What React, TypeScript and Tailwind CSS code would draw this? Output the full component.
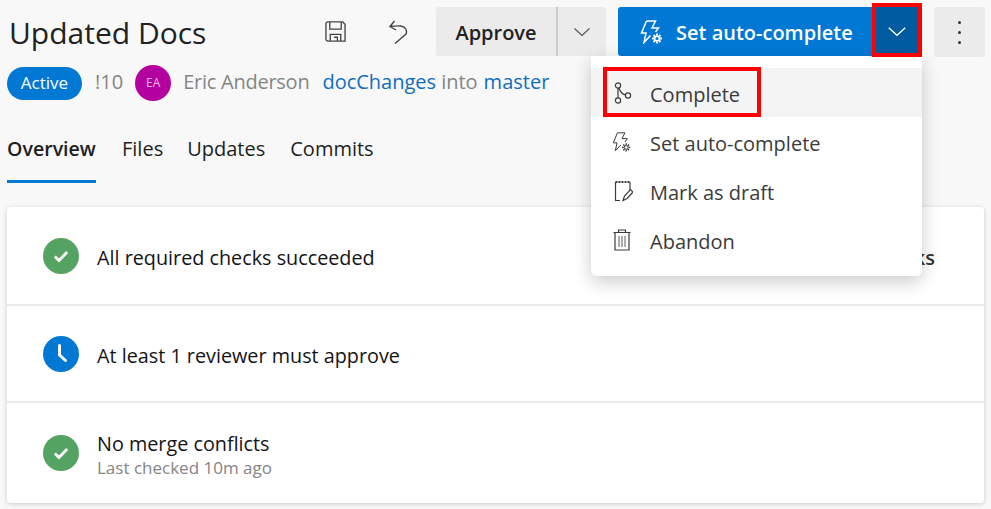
import React from "react";

const Bolt = ({ className, sw = 1.4 }: { className?: string; sw?: number }) => (
  <svg viewBox="0 0 24 24" fill="none" stroke="currentColor" strokeWidth={sw} className={className}>
    <path d="M6.5 1H15.5L12 8H18.5L15.5 12M6.5 1 1.5 13H6L4 22.5 10.5 15.5" />
    <circle cx="17" cy="18.5" r="2.3" />
    <path d="M17 13.5v2.2M17 21.3v2.2M12 18.5h2.2M19.8 18.5h2.2M13.5 15l1.5 1.5M19 20.5l1.5 1.5M13.5 22l1.5-1.5M19 16.5l1.5-1.5" strokeWidth={sw + 0.4} />
  </svg>
);

const Check = () => (
  <div className="flex h-9 w-9 shrink-0 items-center justify-center rounded-full bg-[#55a362]">
    <svg viewBox="0 0 16 16" className="h-[18px] w-[18px]" fill="none" stroke="#fff" strokeWidth="2.5">
      <path d="M2.5 8.5 6.2 12 13.5 4.5" />
    </svg>
  </div>
);

const Clock = () => (
  <div className="flex h-9 w-9 shrink-0 items-center justify-center rounded-full bg-[#0078d4]">
    <svg viewBox="0 0 36 36" className="h-9 w-9" fill="none" stroke="#fff" strokeWidth="3" strokeLinecap="round" strokeLinejoin="round">
      <path d="M16.5 9.5v9.5l6 5.5" />
    </svg>
  </div>
);

const Chevron = ({ className }: { className?: string }) => (
  <svg viewBox="0 0 18 10" fill="none" stroke="currentColor" strokeWidth="1.2" className={className}>
    <path d="M1.5 1.5 9 8.5l7.5-7" />
  </svg>
);

const MenuItem = ({ icon, label, active }: { icon: React.ReactNode; label: string; active?: boolean }) => (
  <div className={`flex h-[49px] items-center pl-[20px] text-[#3b3b3b] ${active ? "bg-[#f4f4f4]" : ""}`}>
    <div className="flex w-[22px] justify-center">{icon}</div>
    <span className="ml-[17px] pt-[5px] text-[20px]">{label}</span>
  </div>
);

const Row = ({ icon, title, sub, h }: { icon: React.ReactNode; title: string; sub?: string; h: string }) => (
  <div className={`flex items-center gap-[18px] pl-[36px] ${h}`}>
    {icon}
    <div className="flex flex-col pt-[4px]">
      <span className="text-[19.8px] leading-[26px] text-[#141414]">{title}</span>
      {sub && <span className="text-[17px] leading-[22px] text-[#858585]">{sub}</span>}
    </div>
  </div>
);

export default function App() {
  return (
    <div className="relative h-[509px] w-[991px] overflow-hidden bg-[#f8f8f8] font-['Open_Sans',sans-serif]">
      <header className="flex items-start pt-[7px]">
        <h1 className="ml-[9px] w-[316px] text-[30px] leading-[52px] font-normal text-[#222]">Updated Docs</h1>
        <div className="flex h-[49px] items-center gap-[43px] text-[#444]">
          <svg viewBox="0 0 22 22" fill="none" stroke="currentColor" strokeWidth="1.4" className="h-[21px] w-[21px]">
            <path d="M3 1h15.5L21 3.5V21H3a2 2 0 0 1-2-2V3a2 2 0 0 1 2-2zM5 1v7.5h12V1M5.5 21v-7h11v7M9.5 17h3.5v4" />
          </svg>
          <svg viewBox="0 0 20 24" fill="none" stroke="currentColor" strokeWidth="1.4" className="h-[24px] w-[20px]">
            <path d="M5.5 1 1 6.5 7 10M1 6.5c4-.5 8-1 11-.5 4.5.8 6.5 4.5 5 8L6 23.5" />
          </svg>
        </div>
        <div className="ml-[27px] flex h-[49px] w-[170px] rounded-[3px] bg-[#ebebeb] text-[#222]">
          <div className="flex w-[122px] items-center justify-center border-r-2 border-[#cdcdcd] pt-[2px] text-[20px] font-semibold">Approve</div>
          <div className="flex flex-1 items-center justify-center text-[#555]">
            <Chevron className="h-[10px] w-[18px]" />
          </div>
        </div>
        <div className="ml-[12px] flex h-[49px] w-[304px] overflow-hidden rounded-[3px] bg-[#0078d4] text-white">
          <div className="flex w-[254px] items-center pl-[22px]">
            <Bolt className="h-[24px] w-[24px]" sw={1.5} />
            <span className="ml-[12px] pt-[3px] text-[20px] font-semibold">Set auto-complete</span>
          </div>
          <div className="flex flex-1 items-center justify-center bg-[#005ba1]">
            <Chevron className="h-[11px] w-[20px]" />
          </div>
        </div>
        <div className="ml-[12px] flex h-[50px] w-[51px] flex-col items-center justify-center gap-[7px] rounded-[3px] bg-[#ebebeb]">
          <span className="h-[3px] w-[3px] rounded-full bg-[#333]" />
          <span className="h-[3px] w-[3px] rounded-full bg-[#333]" />
          <span className="h-[3px] w-[3px] rounded-full bg-[#333]" />
        </div>
      </header>

      <div className="mt-[6px] flex h-[36px] items-center pl-[7px] text-[20px]">
        <span className="flex h-[33px] w-[75px] items-center justify-center rounded-full bg-[#0078d4] pb-[1px] text-[17px] font-medium text-white">Active</span>
        <span className="mb-[3px] ml-[13px] text-[#858585]">!10</span>
        <span className="ml-[12px] flex h-9 w-9 items-center justify-center rounded-full bg-[#b4009e] text-[12px] text-[#f0b8e6]">EA</span>
        <span className="mb-[3px] ml-[12px] tracking-[-0.25px] text-[#858585]">Eric Anderson</span>
        <span className="mb-[3px] ml-[13px] text-[#106ebe]">docChanges</span>
        <span className="mb-[3px] ml-[5px] text-[#858585]">into</span>
        <span className="mb-[3px] ml-[6px] text-[#106ebe]">master</span>
      </div>

      <nav className="mt-[29px] flex h-[53px] pl-[7px] text-[20px] text-[#1e1e1e]">
        <div className="h-full w-[89px] border-b-[3px] border-[#0078d4] pt-[4px] text-[19.6px] font-semibold">Overview</div>
        <div className="ml-[26px] pt-[4px]">Files</div>
        <div className="ml-[24px] pt-[4px]">Updates</div>
        <div className="ml-[25px] pt-[4px]">Commits</div>
      </nav>

      <section className="mx-[7px] mt-[24px] h-[296px] rounded-[4px] bg-white shadow-[0_1px_5px_rgba(0,0,0,0.18)]">
        <div className="relative border-b-2 border-[#eaeaea]">
          <Row icon={<Check />} title="All required checks succeeded" h="h-[97px]" />
          <span className="absolute top-[36px] right-[49px] text-[20px] font-semibold text-[#333]">View checks</span>
        </div>
        <div className="border-b-2 border-[#eaeaea]">
          <Row icon={<Clock />} title="At least 1 reviewer must approve" h="h-[95px]" />
        </div>
        <Row icon={<Check />} title="No merge conflicts" sub="Last checked 10m ago" h="h-[100px]" />
      </section>

      <div className="absolute top-[56px] left-[591px] w-[331px] rounded-b-[6px] bg-white pt-[12px] pb-[12px] shadow-[0_6px_18px_rgba(0,0,0,0.2)]">
        <MenuItem active label="Complete" icon={
          <svg viewBox="0 0 20 24" fill="none" stroke="currentColor" strokeWidth="1.2" className="h-[24px] w-[20px]">
            <circle cx="6" cy="4.5" r="2.6" /><circle cx="6" cy="19.5" r="2.6" /><circle cx="16" cy="14.5" r="2.6" />
            <path d="M6 7.1v9.8M7 7c1 3.5 3 6 6.5 7" />
          </svg>} />
        <MenuItem label="Set auto-complete" icon={<Bolt className="h-[20px] w-[20px]" sw={1.2} />} />
        <MenuItem label="Mark as draft" icon={
          <svg viewBox="0 0 22 24" fill="none" stroke="currentColor" strokeWidth="1.2" className="h-[24px] w-[22px]">
            <path d="M4.5 3H19" strokeWidth="2" strokeDasharray="2 1" />
            <path d="M4.5 3v18.5H9M19 3v8" />
            <path d="M12 21.5l1.5-4.5 6-6.5 2.5 2.5-6 6.5z" />
          </svg>} />
        <MenuItem label="Abandon" icon={
          <svg viewBox="0 0 20 24" fill="none" stroke="currentColor" strokeWidth="1.2" className="h-[24px] w-[20px]">
            <path d="M1.5 4.5h17M6.5 4.5v-2.5h7v2.5M3 4.5v17.5h14V4.5" />
            <path d="M7 8v11M10 8v11M13 8v11" stroke="#777" />
          </svg>} />
      </div>

      <div className="pointer-events-none absolute top-[3px] left-[872px] h-[54px] w-[50px] border-4 border-[#f00]" />
      <div className="pointer-events-none absolute top-[67px] left-[603px] h-[50px] w-[158px] border-4 border-[#f00]" />
    </div>
  );
}
